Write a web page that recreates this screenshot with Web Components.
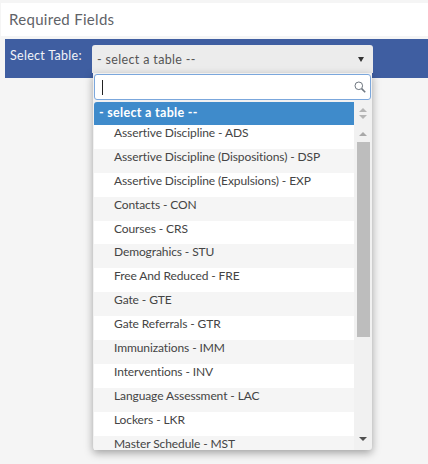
<!DOCTYPE html>
<html>
<head>
<meta charset="utf-8">
<title>Required Fields</title>
<style>
  html, body { margin: 0; padding: 0; background: #f5f5f5; }
  body { font-family: Lato, "Open Sans", sans-serif; height: 464px; overflow: hidden; }
</style>
</head>
<body>
<required-panel heading="Required Fields">
  <table-bar label="Select Table:">
    <table-select value="- select a table --">
      <table-option>Assertive Discipline - ADS</table-option>
      <table-option>Assertive Discipline (Dispositions) - DSP</table-option>
      <table-option>Assertive Discipline (Expulsions) - EXP</table-option>
      <table-option>Contacts - CON</table-option>
      <table-option>Courses - CRS</table-option>
      <table-option>Demograhics - STU</table-option>
      <table-option>Free And Reduced - FRE</table-option>
      <table-option>Gate - GTE</table-option>
      <table-option>Gate Referrals - GTR</table-option>
      <table-option>Immunizations - IMM</table-option>
      <table-option>Interventions - INV</table-option>
      <table-option>Language Assessment - LAC</table-option>
      <table-option>Lockers - LKR</table-option>
      <table-option>Master Schedule - MST</table-option>
    </table-select>
  </table-bar>
</required-panel>

<script>
class RequiredPanel extends HTMLElement {
  constructor() {
    super();
    this.attachShadow({ mode: 'open' });
  }

  connectedCallback() {
    this.shadowRoot.innerHTML = `
      <style>
        :host { display: block; padding-top: 3px; }
        h2 {
          margin: 0 0 3px 1px;
          height: 33px;
          box-sizing: border-box;
          padding: 7px 0 0 8px;
          background: #fff;
          color: #5f6368;
          font: 400 15px/18px Lato, sans-serif;
          letter-spacing: 0.3px;
        }
        .body { padding-left: 5px; }
      </style>
      <h2>${this.getAttribute('heading') || ''}</h2>
      <div class="body"><slot></slot></div>
    `;
  }
}

class TableBar extends HTMLElement {
  constructor() {
    super();
    this.attachShadow({ mode: 'open' });
  }

  connectedCallback() {
    this.shadowRoot.innerHTML = `
      <style>
        :host {
          display: flex;
          height: 39px;
          box-sizing: border-box;
          padding: 6px 55px 0 5px;
          background: #3f5ea1;
        }
        label {
          width: 82px;
          flex: none;
          color: #f2f4f8;
          font: 400 12.5px/22px Lato, sans-serif;
          letter-spacing: 0.3px;
        }
        ::slotted(*) { flex: 1; }
      </style>
      <label>${this.getAttribute('label') || ''}</label>
      <slot></slot>
    `;
  }
}

class TableSelect extends HTMLElement {
  constructor() {
    super();
    this.attachShadow({ mode: 'open' });
  }

  connectedCallback() {
    const value = this.getAttribute('value') || '';
    this.shadowRoot.innerHTML = `
      <style>
        :host { display: block; position: relative; height: 27px; }
        .current {
          display: flex;
          align-items: center;
          justify-content: space-between;
          height: 28px;
          box-sizing: border-box;
          padding: 0 9px 0 5px;
          background: #ececec;
          border-radius: 3px 3px 0 0;
          color: #555;
          font-size: 12.5px;
          letter-spacing: 0.35px;
        }
        .caret {
          width: 0;
          height: 0;
          border: 3px solid transparent;
          border-top: 5px solid #333;
          border-bottom: 0;
        }
        .menu {
          position: absolute;
          left: 1px;
          right: 1px;
          top: 28px;
          height: 377px;
          background: #f1f1f1;
          border-radius: 0 0 3px 3px;
          box-shadow: 0 3px 8px rgba(0, 0, 0, .35);
          display: flex;
          flex-direction: column;
          overflow: hidden;
        }
        .search {
          display: flex;
          align-items: center;
          justify-content: space-between;
          height: 26px;
          box-sizing: border-box;
          margin: 1px 1px 2px;
          padding: 0 4px 0 7px;
          background: #fff;
          border: 1px solid #7ba7dc;
          border-radius: 3px;
        }
        .cursor { width: 1px; height: 15px; background: #222; }
        .group { display: flex; height: 23px; flex: none; margin-left: 1px; }
        .group-label {
          width: 260px;
          box-sizing: border-box;
          padding-left: 5px;
          background: #3f8bcb;
          border-radius: 3px 0 0 0;
          color: #fff;
          font-size: 12.5px;
          font-weight: 700;
          letter-spacing: 0.3px;
          line-height: 22px;
        }
        .arrows {
          flex: 1;
          display: flex;
          flex-direction: column;
          align-items: center;
          justify-content: center;
          gap: 3px;
        }
        .up, .down { width: 0; height: 0; border: 4px solid transparent; border-top: 0; border-bottom: 4px solid #b5b5b5; }
        .down { border-bottom: 0; border-top: 4px solid #b5b5b5; }
        .lower { display: flex; flex: 1; min-height: 0; margin-left: 1px; }
        .list { width: 260px; overflow: hidden; background: #fff; }
        .track {
          flex: 1;
          display: flex;
          flex-direction: column;
          align-items: center;
          padding: 7px 0 9px;
          box-sizing: border-box;
        }
        .thumb { width: 13px; height: 195px; margin: 6px 0 auto; background: #bdbdbd; }
        .track .down { border-top-color: #505050; }
        .track .up { border-bottom-color: #a8a8a8; }
      </style>
      <div class="current"><span>${value}</span><span class="caret"></span></div>
      <div class="menu">
        <div class="search">
          <span class="cursor"></span>
          <svg width="12" height="12" viewBox="0 0 12 12" fill="none" stroke="#6f7780">
            <circle cx="4.8" cy="4.8" r="3.8"></circle>
            <path d="M7.6 7.6 11.2 11.2" stroke-width="1.6"></path>
          </svg>
        </div>
        <div class="group">
          <div class="group-label">${value}</div>
          <div class="arrows"><span class="up"></span><span class="down"></span></div>
        </div>
        <div class="lower">
          <div class="list"><slot></slot></div>
          <div class="track"><span class="up"></span><span class="thumb"></span><span class="down"></span></div>
        </div>
      </div>
    `;
  }
}

class TableOption extends HTMLElement {
  constructor() {
    super();
    this.attachShadow({ mode: 'open' });
  }

  connectedCallback() {
    this.shadowRoot.innerHTML = `
      <style>
        :host {
          display: block;
          height: 23.9px;
          box-sizing: border-box;
          padding-left: 20px;
          color: #444;
          font-size: 12px;
          line-height: 16px;
          letter-spacing: -0.1px;
          white-space: nowrap;
        }
        :host(:nth-child(even)) { background: #f5f5f5; }
      </style>
      <slot></slot>
    `;
  }
}

customElements.define('required-panel', RequiredPanel);
customElements.define('table-bar', TableBar);
customElements.define('table-select', TableSelect);
customElements.define('table-option', TableOption);
</script>
</body>
</html>
